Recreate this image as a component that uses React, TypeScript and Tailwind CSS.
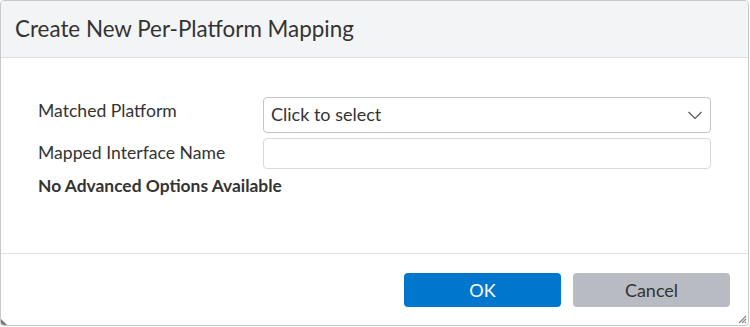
export default function App() {
  return (
    <div className="w-[750px] h-[327px] bg-white" style={{ fontFamily: 'Lato, "Noto Sans", sans-serif' }}>
      <div className="relative w-[749px] h-[326px] border border-[#c9c9c9] rounded-[4px] bg-white flex flex-col overflow-hidden">
        <div className="h-[57px] shrink-0 bg-[#f3f4f5] border-b border-[#dedede] flex items-center pl-[14px]">
          <span className="text-[22.4px] text-[#333333]">Create New Per-Platform Mapping</span>
        </div>
        <div className="h-[196px] shrink-0 border-b border-[#e2e2e2] pl-[37px] pr-[37px] pt-[39px]">
          <div className="flex items-center h-[36px]">
            <div className="w-[225px] text-[17.6px] text-[#333333] -mt-[7px]">Matched Platform</div>
            <div className="flex-1 h-[36px] border border-[#c4c4c4] rounded-[4px] flex items-center justify-between pl-[7px] pr-[6px]">
              <span className="text-[18px] text-[#333333] -mt-[2px]">Click to select</span>
              <svg width="18" height="18" viewBox="0 0 18 18" fill="none">
                <path d="M2.5 6 L9 12.5 L15.5 6" stroke="#555" strokeWidth="1.2" />
              </svg>
            </div>
          </div>
          <div className="flex items-center h-[31px] mt-[5px]">
            <div className="w-[225px] text-[17.6px] text-[#333333] -mt-[1px]">Mapped Interface Name</div>
            <div className="flex-1 h-[31px] border border-[#d9d9d9] rounded-[4px]" />
          </div>
          <div className="mt-[4px] text-[17.4px] font-bold text-[#333333]">No Advanced Options Available</div>
        </div>
        <div className="flex-1 flex justify-end items-start pt-[19px] pr-[18px] gap-[12px]">
          <button className="w-[157px] h-[34px] rounded-[4px] bg-[#0077cc] text-white text-[18px]">OK</button>
          <button className="w-[157px] h-[34px] rounded-[4px] bg-[#b8bcc2] text-[#333333] text-[18px]">Cancel</button>
        </div>
        <svg className="absolute right-[1px] bottom-[1px]" width="10" height="10" viewBox="0 0 10 10">
          <path d="M9 2 L2 9 M9 5 L5 9 M9 8 L8 9" stroke="#888" strokeWidth="1.2" />
        </svg>
        <svg className="absolute left-0 bottom-0" width="6" height="6" viewBox="0 0 6 6">
          <path d="M0 0 L6 6 L0 6 Z" fill="#777" />
        </svg>
      </div>
    </div>
  );
}
